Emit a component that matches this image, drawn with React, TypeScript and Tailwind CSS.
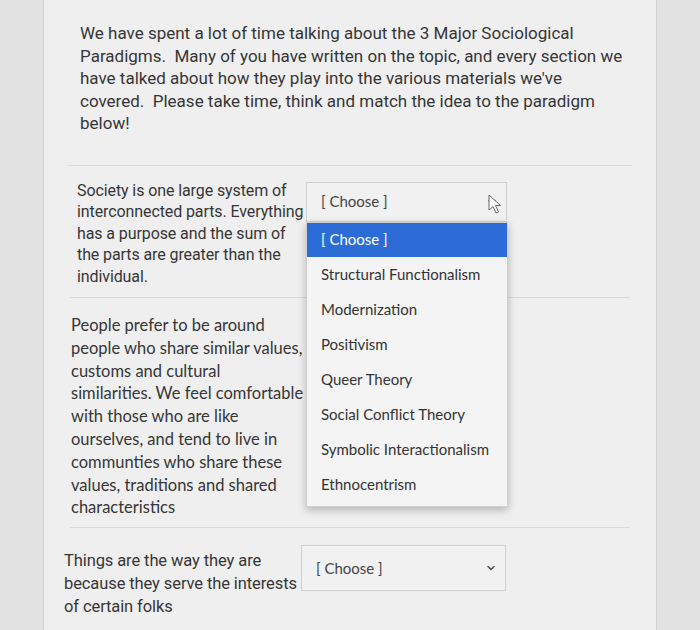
import React from 'react';

const options = [
  '[ Choose ]',
  'Structural Functionalism',
  'Modernization',
  'Positivism',
  'Queer Theory',
  'Social Conflict Theory',
  'Symbolic Interactionalism',
  'Ethnocentrism',
];

const Chevron: React.FC = () => (
  <svg width="12" height="12" viewBox="0 0 12 12" fill="none" stroke="#555" strokeWidth="1.6" strokeLinecap="round" strokeLinejoin="round">
    <path d="M3 4.5 L6 7.5 L9 4.5" />
  </svg>
);

const Cursor: React.FC = () => (
  <svg width="16" height="22" viewBox="0 0 16 22" className="absolute right-[4px] top-[12px]">
    <path d="M2 1 L2 16 L6 12.5 L9 19 L11.5 18 L8.5 11.5 L13.5 11.5 Z" fill="#fff" stroke="#666" strokeWidth="1" strokeLinejoin="round" />
  </svg>
);

export default function App() {
  return (
    <div className="min-h-screen w-full bg-[#e2e2e2] flex justify-center font-['Roboto',sans-serif] text-[#363636]">
      <div className="w-[614px] bg-[#efefef] border-x border-[#d2d2d2] pt-[22px]">
        <p className="pl-[36px] text-[17px] leading-[22.5px] whitespace-pre">
          We have spent a lot of time talking about the 3 Major Sociological{'\n'}Paradigms.  Many of you have written on the topic, and every section we{'\n'}have talked about how they play into the various materials we've{'\n'}covered.  Please take time, think and match the idea to the paradigm{'\n'}below!
        </p>

        <div className="mt-[30px] mx-[24px] border-t border-[#dadada]" />

        {/* question 1 */}
        <div className="flex items-start pl-[33px] pt-[14px] pb-[10px]">
          <p className="w-[229px] text-[16px] leading-[21.5px] tracking-[-0.1px] whitespace-pre">
            Society is one large system of{'\n'}interconnected parts. Everything{'\n'}has a purpose and the sum of{'\n'}the parts are greater than the{'\n'}individual.
          </p>
          <div className="relative mt-[2px] w-[201px]">
            <div className="h-[40px] border border-[#cfcfcf] bg-[#f1f1f1] flex items-center justify-between pl-[14px] pr-[8px] font-['Lato',sans-serif] text-[15px] text-[#444]">
              [ Choose ]
              <Chevron />
            </div>
            <Cursor />
            <ul className="absolute left-0 top-[40px] z-10 w-[202px] bg-[#f4f4f4] border border-[#cfcfcf] shadow-[0_3px_8px_rgba(0,0,0,0.25)] font-['Lato',sans-serif] text-[15px] text-[#333] pb-[4px]">
              {options.map((o, i) => (
                <li
                  key={o}
                  className={
                    i === 0
                      ? 'h-[34px] flex items-center pl-[14px] bg-[#2c6cd6] text-white'
                      : 'h-[35px] flex items-center pl-[14px]'
                  }
                >
                  {o}
                </li>
              ))}
            </ul>
          </div>
        </div>

        <div className="mx-[26px] border-t border-[#dadada]" />

        {/* question 2 */}
        <div className="flex items-start pl-[27px] pt-[16px] pb-[8px]">
          <p className="w-[235px] font-['Lato',sans-serif] text-[16.5px] leading-[22.8px] whitespace-pre">
            People prefer to be around{'\n'}people who share similar values,{'\n'}customs and cultural{'\n'}similarities. We feel comfortable{'\n'}with those who are like{'\n'}ourselves, and tend to live in{'\n'}communties who share these{'\n'}values, traditions and shared{'\n'}characteristics
          </p>
          <div className="h-[40px] w-[201px] border border-[#cfcfcf] bg-[#f1f1f1]" />
        </div>

        <div className="mx-[26px] border-t border-[#dadada]" />

        {/* question 3 */}
        <div className="flex items-start pl-[20px] pt-[21px]">
          <p className="w-[237px] text-[16.5px] leading-[23px] tracking-[-0.1px] whitespace-pre">
            Things are the way they are{'\n'}because they serve the interests{'\n'}of certain folks
          </p>
          <div className="mt-[-4px] h-[46px] w-[205px] border border-[#cfcfcf] bg-[#f1f1f1] flex items-center justify-between pl-[14px] pr-[8px] font-['Lato',sans-serif] text-[15px] text-[#444]">
            [ Choose ]
            <Chevron />
          </div>
        </div>
      </div>
    </div>
  );
}
